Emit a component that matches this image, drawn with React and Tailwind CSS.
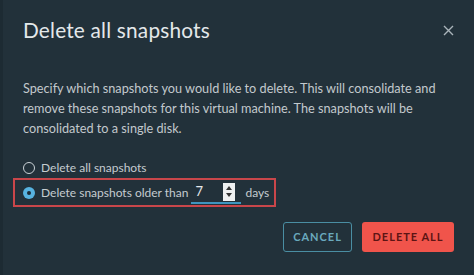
import React, { useState } from 'react';

const font = { fontFamily: '"Lato", "Liberation Sans", sans-serif' };

function Radio({ checked }) {
  if (checked) {
    return (
      <span className="flex h-[12px] w-[12px] shrink-0 items-center justify-center rounded-full bg-[#57b3e0]">
        <span className="h-[4px] w-[4px] rounded-full bg-[#1c2a33]" />
      </span>
    );
  }
  return <span className="h-[12px] w-[12px] shrink-0 rounded-full border border-[#c9d1d6]" />;
}

export default function App() {
  const [days, setDays] = useState('7');

  return (
    <div className="h-[275px] w-[474px] overflow-hidden bg-[#22313a] border-l-[3px] border-[#1d2b33] text-[#c5ccd0]" style={font}>
      {/* Header */}
      <div className="flex items-center justify-between pl-[20px] pr-[20px] pt-[17px]">
        <h1 className="text-[20.8px] leading-[26px] font-normal tracking-[0.2px] text-[#e4e8ea]">Delete all snapshots</h1>
        <button className="text-[#aab4ba]">
          <svg width="11" height="11" viewBox="0 0 11 11" fill="none" stroke="currentColor" strokeWidth="1.4">
            <path d="M1 1L10 10M10 1L1 10" />
          </svg>
        </button>
      </div>

      {/* Body */}
      <p className="mt-[35px] whitespace-nowrap pl-[20px] text-[12.7px] leading-[20px] text-[#c2c9cd]">
        Specify which snapshots you would like to delete. This will consolidate and<br />
        remove these snapshots for this virtual machine. The snapshots will be<br />
        consolidated to a single disk.
      </p>

      <div className="mt-[21px] flex flex-col pl-[10px] text-[12px]">
        <label className="flex h-[18px] items-center gap-[6px] pl-[10px]">
          <Radio checked={false} />
          <span className="whitespace-nowrap">Delete all snapshots</span>
        </label>
        <div className="mt-[1px] flex h-[29px] w-[263px] items-center border-2 border-[#c9464a] pl-[8px]">
          <Radio checked />
          <span className="ml-[6px] whitespace-nowrap">Delete snapshots older than</span>
          <div className="ml-[3px] flex h-[22px] w-[50px] shrink-0 items-center border-b-2 border-[#3d95bf]">
            <input
              value={days}
              onChange={(e) => setDays(e.target.value)}
              className="w-[32px] bg-transparent pl-[4px] text-[13px] text-[#e4e8ea] outline-none"
            />
            <div className="flex h-[18px] w-[12px] flex-col items-center justify-center gap-[3px] bg-[#eef0f1]">
              <svg width="6" height="4" viewBox="0 0 6 4"><path d="M3 0L6 4H0Z" fill="#333" /></svg>
              <svg width="6" height="4" viewBox="0 0 6 4"><path d="M0 0H6L3 4Z" fill="#333" /></svg>
            </div>
          </div>
          <span className="ml-[4px] whitespace-nowrap">days</span>
        </div>
      </div>

      {/* Footer */}
      <div className="mt-[15px] flex justify-end gap-[10px] pr-[20px]">
        <button className="h-[30px] w-[69px] rounded-[3px] border border-[#4a8ea3] text-[11px] font-bold tracking-[1px] text-[#6aa9bd]">
          CANCEL
        </button>
        <button className="h-[30px] w-[92px] rounded-[3px] bg-[#f0544b] text-[11px] font-bold tracking-[1px] text-[#5c1414]">
          DELETE ALL
        </button>
      </div>
    </div>
  );
}
